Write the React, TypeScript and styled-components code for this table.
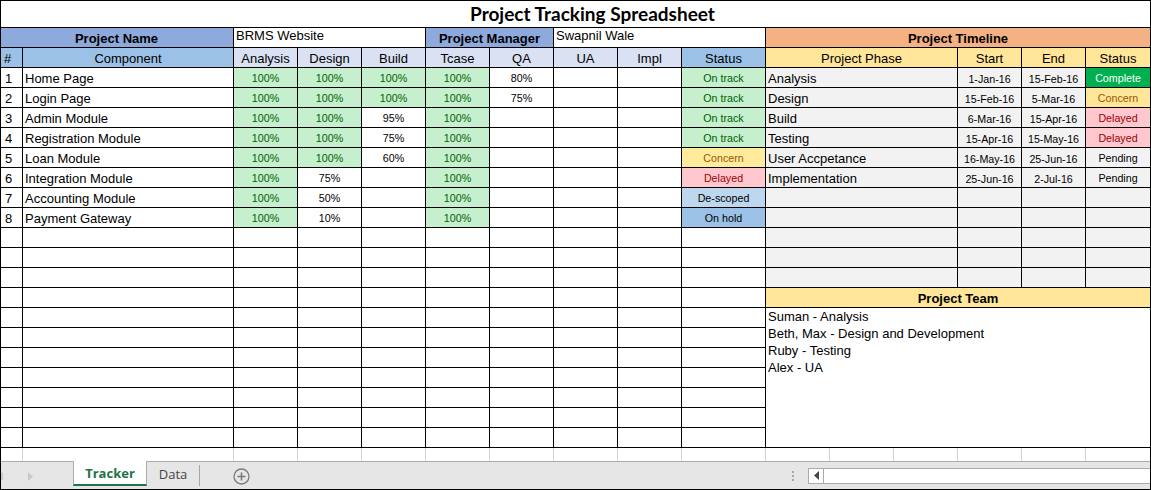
import React from "react";
import styled, { createGlobalStyle } from "styled-components";

const GlobalStyle = createGlobalStyle`
  html, body { margin: 0; padding: 0; background: #ffffff; }
  body { font-family: "Liberation Sans", Arial, sans-serif; color: #000; }
`;

const LINE = "#000000";
const GRID_LIGHT = "#d4d4d4";

const C = {
  projBlue: "#8ea9db",
  hdrBlue: "#9bc2e6",
  lav: "#d9e1f2",
  orange: "#f4b183",
  yellow: "#ffe699",
  goodBg: "#c6efce",
  goodFg: "#006100",
  neutralBg: "#ffeb9c",
  neutralFg: "#9c5700",
  badBg: "#ffc7ce",
  badFg: "#9c0006",
  descoped: "#bdd7ee",
  onhold: "#9bc2e6",
  complete: "#00b050",
  gray: "#f2f2f2",
};

const leftCols = [23, 211, 64, 64, 64, 64, 64, 64, 64, 84];
const rightCols = [64, 64, 64, 64, 64, 65];

const Frame = styled.div`
  position: relative;
  width: 1151px;
  height: 490px;
  overflow: hidden;
  display: flex;
  flex-direction: column;
  background: #fff;
  &::after {
    content: "";
    position: absolute;
    inset: 0;
    border: 1px solid #000;
    pointer-events: none;
  }
`;

const TitleBar = styled.div`
  height: 28px;
  box-sizing: border-box;
  border-bottom: 1px solid ${LINE};
  display: flex;
  align-items: center;
  justify-content: center;
  padding-left: 34px;
  font-family: Lato, "Open Sans", sans-serif;
  font-weight: 700;
  font-size: 19px;
  color: #000;
`;

const Body = styled.div`
  display: flex;
`;

const Grid = styled.div<{ $cols: number[] }>`
  display: grid;
  grid-template-columns: ${(p) => p.$cols.map((c) => `${c}px`).join(" ")};
  grid-auto-rows: 20px;
`;

type Align = "left" | "center";
type VAlign = "top" | "mid" | "low";

const Cell = styled.div<{
  $bg?: string;
  $fg?: string;
  $align?: Align;
  $small?: boolean;
  $bold?: boolean;
  $span?: number;
  $v?: VAlign;
  $pad?: number;
}>`
  box-sizing: border-box;
  border-right: 1px solid ${LINE};
  border-bottom: 1px solid ${LINE};
  background: ${(p) => p.$bg || "#fff"};
  color: ${(p) => p.$fg || "#000"};
  grid-column: span ${(p) => p.$span || 1};
  font-size: ${(p) => (p.$small ? "10.7px" : "13px")};
  font-weight: ${(p) => (p.$bold ? 700 : 400)};
  text-align: ${(p) => p.$align || "center"};
  padding-left: ${(p) => (p.$pad !== undefined ? p.$pad : p.$align === "left" ? 2 : 0)}px;
  line-height: ${(p) => (p.$v === "top" ? "15px" : "19px")};
  padding-top: ${(p) => (p.$v === "top" ? 0 : p.$v === "low" ? 2 : 1)}px;
  white-space: nowrap;
  overflow: hidden;
`;

const TeamBox = styled.div`
  box-sizing: border-box;
  grid-column: span 6;
  grid-row: span 7;
  border-right: 1px solid ${LINE};
  border-bottom: 1px solid ${LINE};
  background: #fff;
  font-size: 13px;
  line-height: 17px;
  padding: 0 0 0 2px;
  display: flex;
  flex-direction: column;
`;

const Strip = styled.div`
  display: flex;
  height: 13px;
`;

const StripCell = styled.div<{ $w: number }>`
  box-sizing: border-box;
  width: ${(p) => p.$w}px;
  border-right: 1px solid ${GRID_LIGHT};
`;

const TabBar = styled.div`
  height: 29px;
  box-sizing: border-box;
  background: #e6e6e6;
  border-top: 1px solid #ababab;
  display: flex;
  align-items: stretch;
  font-family: "Open Sans", "Liberation Sans", sans-serif;
`;

const NavArea = styled.div`
  width: 73px;
  display: flex;
  align-items: center;
  gap: 25px;
  box-sizing: border-box;
`;

const NavLeft = styled.span`
  display: flex;
  margin-left: -2px;
`;

const Tab = styled.div<{ $active?: boolean }>`
  box-sizing: border-box;
  margin-top: -1px;
  height: 25px;
  width: ${(p) => (p.$active ? 74 : 52)}px;
  display: flex;
  align-items: center;
  justify-content: center;
  font-size: 13px;
  font-weight: ${(p) => (p.$active ? 700 : 400)};
  color: ${(p) => (p.$active ? "#217346" : "#444")};
  background: ${(p) => (p.$active ? "#fff" : "transparent")};
  border-left: ${(p) => (p.$active ? "1px solid #ababab" : "none")};
  border-right: ${(p) => (p.$active ? "1px solid #ababab" : "none")};
  border-bottom: ${(p) => (p.$active ? "2px solid #217346" : "none")};
`;

const Sep = styled.div`
  width: 1px;
  background: #a6a6a6;
  margin: 3px 0 4px 0;
`;

const AddButton = styled.div`
  margin-left: 33px;
  display: flex;
  align-items: center;
`;

const Spacer = styled.div`
  flex: 1;
`;

const Dots = styled.div`
  display: flex;
  flex-direction: column;
  justify-content: center;
  gap: 2px;
  margin-right: 14px;
  & > span {
    width: 2px;
    height: 2px;
    background: #a6a6a6;
  }
`;

const ScrollBtn = styled.div`
  align-self: center;
  margin-top: -1px;
  width: 16px;
  height: 16px;
  box-sizing: border-box;
  border: 1px solid #ababab;
  background: #fff;
  display: flex;
  align-items: center;
  justify-content: center;
`;

const ScrollTrack = styled.div`
  align-self: center;
  margin-top: -1px;
  width: 327px;
  height: 16px;
  box-sizing: border-box;
  border-top: 1px solid #ababab;
  border-bottom: 1px solid #ababab;
  background: #fff;
`;

type Pct = string | undefined;
interface Row {
  n: number;
  name: string;
  vals: Pct[];
  status: string;
}

const rows: Row[] = [
  { n: 1, name: "Home Page", vals: ["100%", "100%", "100%", "100%", "80%"], status: "On track" },
  { n: 2, name: "Login Page", vals: ["100%", "100%", "100%", "100%", "75%"], status: "On track" },
  { n: 3, name: "Admin Module", vals: ["100%", "100%", "95%", "100%"], status: "On track" },
  { n: 4, name: "Registration Module", vals: ["100%", "100%", "75%", "100%"], status: "On track" },
  { n: 5, name: "Loan Module", vals: ["100%", "100%", "60%", "100%"], status: "Concern" },
  { n: 6, name: "Integration Module", vals: ["100%", "75%", undefined, "100%"], status: "Delayed" },
  { n: 7, name: "Accounting Module", vals: ["100%", "50%", undefined, "100%"], status: "De-scoped" },
  { n: 8, name: "Payment Gateway", vals: ["100%", "10%", undefined, "100%"], status: "On hold" },
];

const statusStyle: Record<string, { bg: string; fg: string }> = {
  "On track": { bg: C.goodBg, fg: C.goodFg },
  Concern: { bg: C.neutralBg, fg: C.neutralFg },
  Delayed: { bg: C.badBg, fg: C.badFg },
  "De-scoped": { bg: C.descoped, fg: "#000" },
  "On hold": { bg: C.onhold, fg: "#000" },
  Complete: { bg: C.complete, fg: "#fff" },
  Pending: { bg: C.gray, fg: "#000" },
};

const phases = [
  { name: "Analysis", start: "1-Jan-16", end: "15-Feb-16", status: "Complete" },
  { name: "Design", start: "15-Feb-16", end: "5-Mar-16", status: "Concern" },
  { name: "Build", start: "6-Mar-16", end: "15-Apr-16", status: "Delayed" },
  { name: "Testing", start: "15-Apr-16", end: "15-May-16", status: "Delayed" },
  { name: "User Accpetance", start: "16-May-16", end: "25-Jun-16", status: "Pending" },
  { name: "Implementation", start: "25-Jun-16", end: "2-Jul-16", status: "Pending" },
];

const team = [
  "Suman - Analysis",
  "Beth, Max - Design and Development",
  "Ruby - Testing",
  "Alex - UA",
];

const stages = ["Analysis", "Design", "Build", "Tcase", "QA", "UA", "Impl"];

function LeftTable() {
  const empty = Array.from({ length: 11 });
  return (
    <Grid $cols={leftCols}>
      <Cell $span={2} $bg={C.projBlue} $bold>Project Name</Cell>
      <Cell $span={3} $align="left" $v="top">BRMS Website</Cell>
      <Cell $span={2} $bg={C.projBlue} $bold>Project Manager</Cell>
      <Cell $span={3} $align="left" $v="top">Swapnil Wale</Cell>

      <Cell $bg={C.hdrBlue} $align="left" $pad={4}>#</Cell>
      <Cell $bg={C.hdrBlue}>Component</Cell>
      {stages.map((s) => (
        <Cell key={s} $bg={C.lav}>
          {s}
        </Cell>
      ))}
      <Cell $bg={C.hdrBlue}>Status</Cell>

      {rows.map((r) => (
        <React.Fragment key={r.n}>
          <Cell $align="left" $pad={5}>{r.n}</Cell>
          <Cell $align="left">{r.name}</Cell>
          {Array.from({ length: 7 }).map((_, i) => {
            const v = r.vals[i];
            const full = v === "100%";
            return (
              <Cell key={i} $small $bg={full ? C.goodBg : "#fff"} $fg={full ? C.goodFg : "#000"}>
                {v}
              </Cell>
            );
          })}
          <Cell $small $bg={statusStyle[r.status].bg} $fg={statusStyle[r.status].fg}>
            {r.status}
          </Cell>
        </React.Fragment>
      ))}

      {empty.map((_, i) => (
        <React.Fragment key={`e${i}`}>
          {leftCols.map((_, j) => (
            <Cell key={j} />
          ))}
        </React.Fragment>
      ))}
    </Grid>
  );
}

function RightPanel() {
  return (
    <Grid $cols={rightCols}>
      <Cell $span={6} $bg={C.orange} $bold>Project Timeline</Cell>
      <Cell $span={3} $bg={C.yellow}>Project Phase</Cell>
      <Cell $bg={C.yellow}>Start</Cell>
      <Cell $bg={C.yellow}>End</Cell>
      <Cell $bg={C.yellow}>Status</Cell>

      {phases.map((p) => (
        <React.Fragment key={p.name}>
          <Cell $span={3} $bg={C.gray} $align="left">{p.name}</Cell>
          <Cell $bg={C.gray} $small $v="low">{p.start}</Cell>
          <Cell $bg={C.gray} $small $v="low">{p.end}</Cell>
          <Cell
            $small
            $bg={p.status === "Concern" ? C.yellow : statusStyle[p.status].bg}
            $fg={statusStyle[p.status].fg}
          >
            {p.status}
          </Cell>
        </React.Fragment>
      ))}

      {Array.from({ length: 5 }).map((_, i) => (
        <React.Fragment key={`g${i}`}>
          <Cell $span={3} $bg={C.gray} />
          <Cell $bg={C.gray} />
          <Cell $bg={C.gray} />
          <Cell $bg={C.gray} />
        </React.Fragment>
      ))}

      <Cell $span={6} $bg={C.yellow} $bold>Project Team</Cell>
      <TeamBox>
        {team.map((t) => (
          <span key={t}>{t}</span>
        ))}
      </TeamBox>
    </Grid>
  );
}

const stripCols = [...leftCols, ...rightCols];

function PlusIcon() {
  return (
    <svg width="17" height="17" viewBox="0 0 17 17">
      <circle cx="8.5" cy="8.5" r="7.5" fill="none" stroke="#7a7a7a" strokeWidth="1.3" />
      <path d="M8.5 4.5v8M4.5 8.5h8" stroke="#7a7a7a" strokeWidth="1.6" />
    </svg>
  );
}

function Arrow({ dir, color }: { dir: "left" | "right"; color: string }) {
  return (
    <svg width="5" height="9" viewBox="0 0 5 9">
      {dir === "left" ? (
        <path d="M5 0L0 4.5L5 9Z" fill={color} />
      ) : (
        <path d="M0 0L5 4.5L0 9Z" fill={color} />
      )}
    </svg>
  );
}

export default function App() {
  return (
    <>
      <GlobalStyle />
      <Frame>
        <TitleBar>Project Tracking Spreadsheet</TitleBar>
        <Body>
          <LeftTable />
          <RightPanel />
        </Body>
        <Strip>
          {stripCols.map((w, i) => (
            <StripCell key={i} $w={w} />
          ))}
        </Strip>
        <TabBar>
          <NavArea>
            <NavLeft>
              <Arrow dir="left" color="#c8c8c8" />
            </NavLeft>
            <Arrow dir="right" color="#c8c8c8" />
          </NavArea>
          <Tab $active>Tracker</Tab>
          <Tab>Data</Tab>
          <Sep />
          <AddButton>
            <PlusIcon />
          </AddButton>
          <Spacer />
          <Dots>
            <span />
            <span />
            <span />
          </Dots>
          <ScrollBtn>
            <Arrow dir="left" color="#444" />
          </ScrollBtn>
          <ScrollTrack />
        </TabBar>
      </Frame>
    </>
  );
}
